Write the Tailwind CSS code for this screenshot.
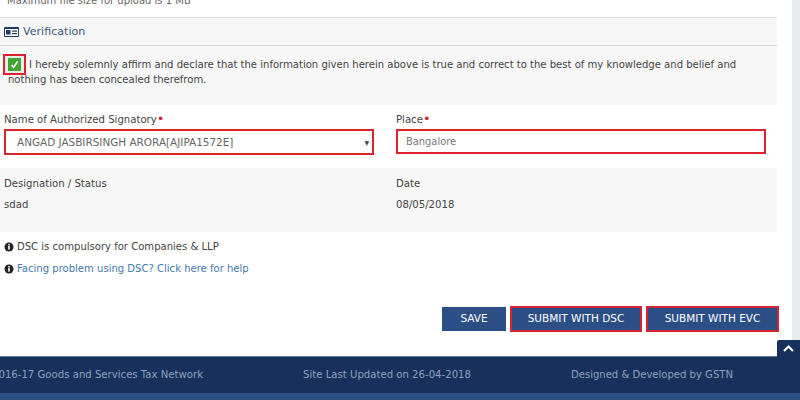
<!DOCTYPE html>
<html lang="en">
<head>
    <meta charset="UTF-8">
    <title>Verification</title>
    <script src="https://cdn.jsdelivr.net/npm/@tailwindcss/browser@4"></script>
</head>
<body class="h-[400px] w-[800px] overflow-hidden bg-[#e9ecef] font-['DejaVu_Sans','Liberation_Sans',sans-serif] text-[10.15px] text-[#444]">

    <!-- form area -->
    <div class="h-[356px] w-[792px] overflow-hidden bg-white">
        <div class="w-[777px]">
            <p class="mt-[-7px] h-[24px] pl-[7px] text-[10px] leading-[16px] text-[#666]">Maximum file size for upload is 1 MB</p>

            <!-- verification heading -->
            <div class="flex h-[29px] items-center gap-[4px] border-y border-[#d9d9d9] bg-[#f7f7f7] pl-[4px] pt-[1px] text-[11.1px] text-[#3c5a78]">
                <svg width="15" height="10" viewBox="0 0 15 10"><rect width="15" height="10" rx="1" fill="#1f3a63"/><rect x="1" y="2" width="13" height="7" fill="#fff"/><rect x="2" y="3" width="4.5" height="4.5" fill="#1f3a63"/><rect x="8" y="3.5" width="5" height="1.2" fill="#1f3a63"/><rect x="8" y="6" width="5" height="1.2" fill="#1f3a63"/></svg>
                <span>Verification</span>
            </div>

            <!-- declaration -->
            <div class="relative h-[59px] bg-[#f7f7f7] pl-[8px] pr-[30px] pt-[11px] text-[10.05px] leading-[15px]">
                <div class="absolute left-[3px] top-[8px] flex h-[21px] w-[23px] items-center justify-center border-2 border-[#d9232e] bg-[#e8efe8]">
                    <div class="flex h-[13px] w-[13px] items-center justify-center bg-[#3fa535]">
                        <svg width="9" height="9" viewBox="0 0 9 9"><path d="M1.5 5 L3.5 7.5 L7.5 1.5" fill="none" stroke="#fff" stroke-width="1.6"/></svg>
                    </div>
                </div>
                <p class="indent-[21px]">I hereby solemnly affirm and declare that the information given herein above is true and correct to the best of my knowledge and belief and nothing has been concealed therefrom.</p>
            </div>

            <!-- signatory and place -->
            <div class="grid h-[63px] grid-cols-[392px_1fr] pt-[8px]">
                <div class="pl-[4px]">
                    <label class="block h-[16px] leading-[14px]">Name of Authorized Signatory<span class="text-[13px] leading-[10px] text-[#d9232e]">•</span></label>
                    <div class="flex h-[26px] w-[370px] items-center justify-between border-2 border-[#d9232e] pl-[11px] pr-[3px] pt-[1px] text-[10.45px] text-[#666]">
                        <span>ANGAD JASBIRSINGH ARORA[AJIPA1572E]</span>
                        <span class="text-[6px] text-[#444]">▼</span>
                    </div>
                </div>
                <div class="pl-[4px]">
                    <label class="block h-[16px] leading-[14px]">Place<span class="text-[13px] leading-[10px] text-[#d9232e]">•</span></label>
                    <div class="flex h-[25px] w-[370px] items-center border-2 border-[#d9232e] pl-[8px] pt-[1px] text-[9.9px] text-[#777]">Bangalore</div>
                </div>
            </div>

            <!-- designation and date -->
            <div class="grid h-[64px] grid-cols-[392px_1fr] bg-[#f7f7f7] pt-[9px] leading-[14px]">
                <div class="pl-[4px]">
                    <p class="mb-[7px]">Designation / Status</p>
                    <p>sdad</p>
                </div>
                <div class="pl-[4px]">
                    <p class="mb-[7px]">Date</p>
                    <p>08/05/2018</p>
                </div>
            </div>

            <!-- notes -->
            <div class="flex items-center gap-[3px] pl-[4px] pt-[8px] text-[10.05px] leading-[14px]">
                <svg width="10" height="10" viewBox="0 0 10 10"><circle cx="5" cy="5" r="4.5" fill="#222"/><rect x="4.2" y="4" width="1.6" height="3.6" fill="#fff"/><rect x="4.2" y="2" width="1.6" height="1.4" fill="#fff"/></svg>
                <span>DSC is compulsory for Companies &amp; LLP</span>
            </div>
            <div class="flex items-center gap-[3px] pl-[4px] pt-[8px] text-[10.05px] leading-[14px] text-[#3f7cac]">
                <svg width="10" height="10" viewBox="0 0 10 10"><circle cx="5" cy="5" r="4.5" fill="#222"/><rect x="4.2" y="4" width="1.6" height="3.6" fill="#fff"/><rect x="4.2" y="2" width="1.6" height="1.4" fill="#fff"/></svg>
                <span>Facing problem using DSC? Click here for help</span>
            </div>

            <!-- buttons -->
            <div class="mr-[-2px] mt-[30px] flex items-start justify-end text-[10.5px] text-white">
                <button class="mt-[1px] h-[24px] w-[64px] bg-[#2c4e86]">SAVE</button>
                <button class="ml-[4px] h-[26px] w-[132px] border-2 border-[#d9232e] bg-[#2c4e86]">SUBMIT WITH DSC</button>
                <button class="ml-[4px] h-[26px] w-[133px] border-2 border-[#d9232e] bg-[#2c4e86]">SUBMIT WITH EVC</button>
            </div>
        </div>
    </div>

    <!-- footer -->
    <div class="relative flex h-[37px] items-center border-t border-[#5b7ba3] bg-[#17305c] text-[#8ea3bf]">
        <span class="ml-[-8px] w-[311px]">2016-17 Goods and Services Tax Network</span>
        <span class="w-[268px]">Site Last Updated on 26-04-2018</span>
        <span class="text-[10.05px]">Designed &amp; Developed by GSTN</span>
        <div class="absolute right-0 top-[-17px] flex h-[17px] w-[23px] items-center justify-center rounded-tl-[2px] bg-[#17305c]">
            <svg width="11" height="7" viewBox="0 0 11 7"><path d="M1 6 L5.5 1.5 L10 6" fill="none" stroke="#fff" stroke-width="2"/></svg>
        </div>
    </div>
    <div class="h-[7px] bg-[#2c4e86]"></div>

</body>
</html>
